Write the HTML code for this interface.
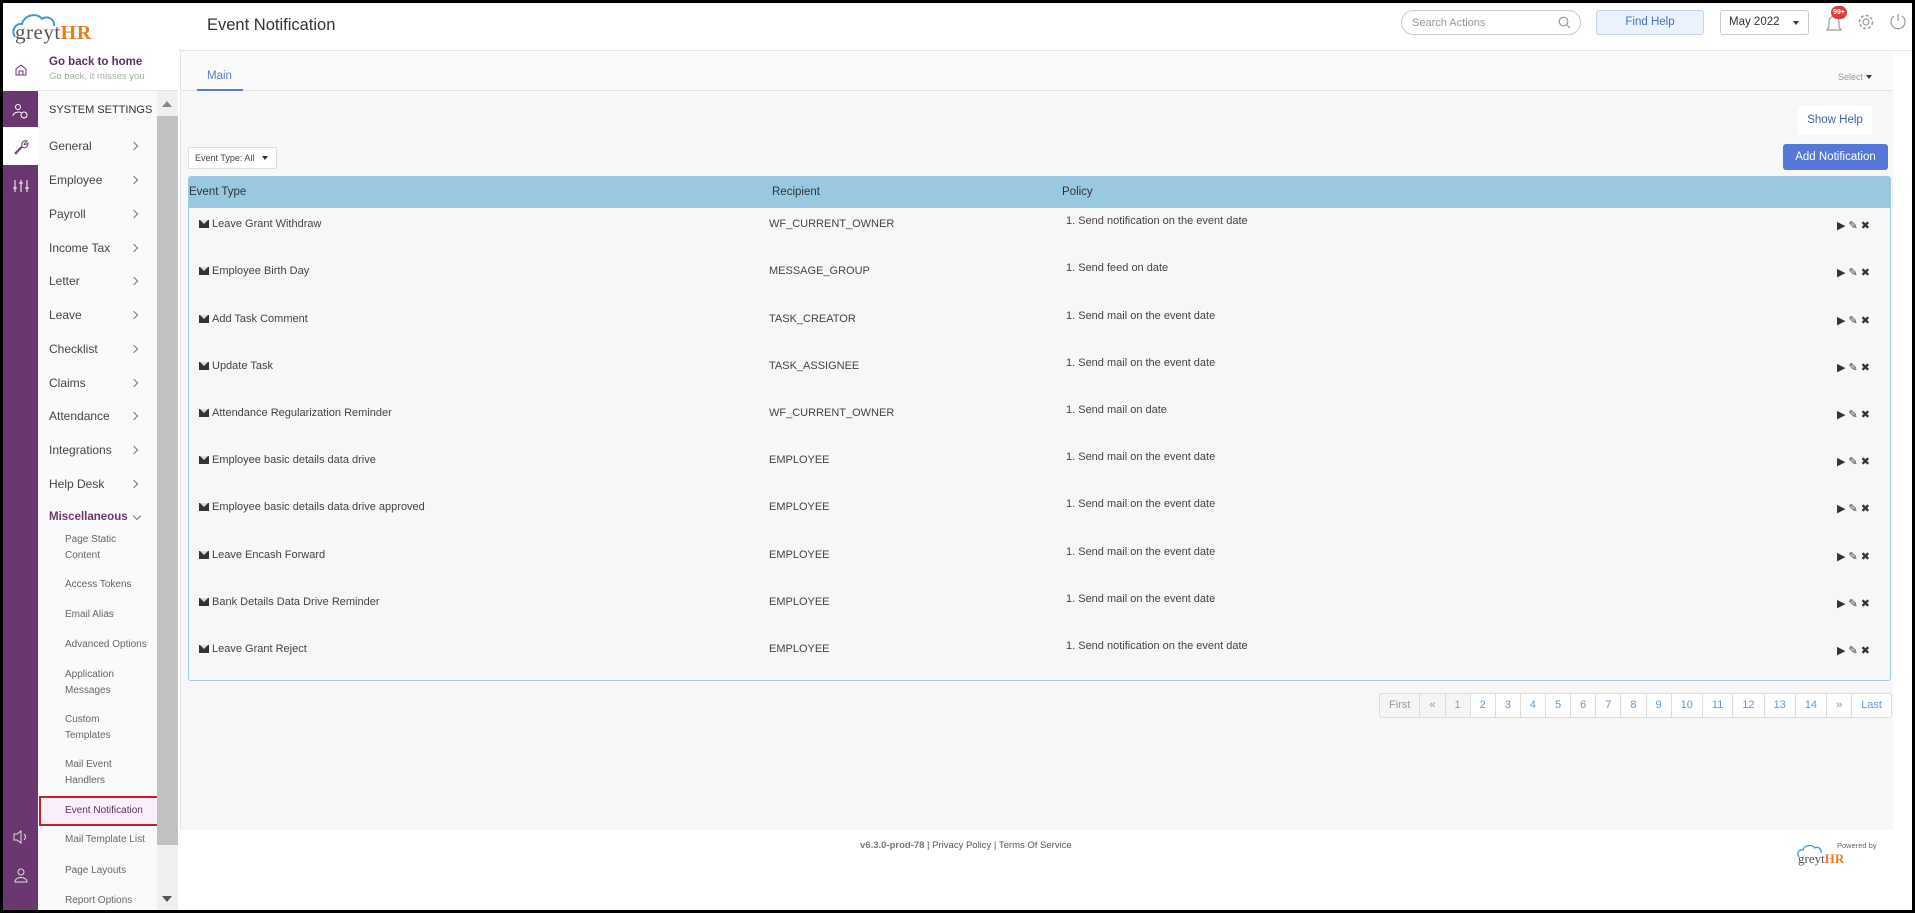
<!DOCTYPE html>
<html><head><meta charset="utf-8"><style>
*{box-sizing:border-box;margin:0;padding:0}
body{width:1915px;height:913px;overflow:hidden;background:#000;font-family:"Liberation Sans",sans-serif;color:#333;position:relative}
.a{position:absolute}
#page{position:absolute;left:3px;top:3px;width:1909px;height:907px;background:#fff;overflow:hidden}
.mi{position:absolute;left:46px;font-size:12px;color:#444}
.chev{position:absolute;left:128px;width:6px;height:6px;border-right:1.2px solid #777;border-top:1.2px solid #777;transform:rotate(45deg)}
.si{position:absolute;left:62px;font-size:10px;color:#666;line-height:16px}
.row{position:absolute;left:186px;width:1700px;height:47px;font-size:11px;color:#444}
.row .e{position:absolute;left:10px;top:10px}
.row .r{position:absolute;left:580px;top:10px}
.row .p{position:absolute;left:877px;top:7px}
.row .ic{position:absolute;left:1648px;top:11px;font-size:11px;color:#333}
.env{display:inline-block;width:10px;height:8px;background:#333;margin-right:3px;vertical-align:-1px;position:relative}
.env:after{content:"";position:absolute;left:1px;top:0;width:8px;height:4px;border-left:4px solid transparent;border-right:4px solid transparent;border-top:4px solid #ddd;box-sizing:border-box}
.pg{display:inline-block;height:23px;line-height:23px;padding:0 9px;border-right:1px solid #ddd;font-size:11px;color:#5b9bd5;background:#fff}
</style></head><body><div id="page">
<div class="a" style="left:6px;top:4px;width:88px;height:38px">
<svg width="88" height="38" class="a" style="left:0;top:0"><path d="M6 30 C2 24 6 16 13 17 C15 8 28 5 33 12 C38 8 46 12 45 19" fill="none" stroke="#3d9bd0" stroke-width="2"/></svg>
<div class="a" style="left:6px;top:13px;font-family:'Liberation Serif',serif;font-size:21px;color:#555;letter-spacing:0.5px">greyt<b style="color:#e67e22;font-family:'Liberation Serif';font-size:20px">HR</b></div>
</div>
<div class="a" style="left:204px;top:13px;font-size:16.5px;color:#333">Event Notification</div>
<div class="a" style="left:1398px;top:7px;width:180px;height:25px;border:1px solid #ccc;border-radius:13px;font-size:11px;color:#999;padding:6px 10px">Search Actions<svg class="a" style="right:9px;top:5px" width="13" height="13"><circle cx="5.5" cy="5.5" r="4.3" fill="none" stroke="#999" stroke-width="1.2"/><path d="M8.6 8.6L12 12" stroke="#999" stroke-width="1.2"/></svg></div>
<div class="a" style="left:1593px;top:7px;width:108px;height:25px;border:1px solid #c7d6e8;background:#eaf2fd;border-radius:3px;font-size:11.5px;color:#4a6fb5;text-align:center;line-height:23px">Find Help</div>
<div class="a" style="left:1717px;top:7px;width:89px;height:25px;border:1px solid #ccc;border-radius:3px;font-size:11.5px;color:#333;line-height:23px;padding-left:8px">May 2022<span class="a" style="right:9px;top:10px;border-left:3px solid transparent;border-right:3px solid transparent;border-top:4px solid #333"></span></div>
<svg class="a" style="left:1820px;top:10px" width="22" height="22"><path d="M4 17 L6 14 V9 C6 5 9 3 11 3 C13 3 16 5 16 9 V14 L18 17 Z" fill="none" stroke="#999" stroke-width="1.2"/></svg>
<div class="a" style="left:1828px;top:3px;width:16px;height:13px;background:#e03b3b;border-radius:7px;font-size:7px;color:#fff;text-align:center;line-height:13px;font-weight:bold">99+</div>
<svg class="a" style="left:1854px;top:10px" width="18" height="18"><circle cx="9" cy="9" r="3" fill="none" stroke="#999" stroke-width="1.2"/><circle cx="9" cy="9" r="6.5" fill="none" stroke="#999" stroke-width="1.5" stroke-dasharray="3 2"/></svg>
<svg class="a" style="left:1886px;top:9px" width="18" height="18"><path d="M5 4 A7 7 0 1 0 13 4" fill="none" stroke="#999" stroke-width="1.2"/><path d="M9 2 V9" stroke="#999" stroke-width="1.2"/></svg>
<div class="a" style="left:0;top:47px;width:1909px;height:1px;background:#e6e6e6"></div>
<div class="a" style="left:0;top:47px;width:35px;height:860px;background:#6b3770"></div>
<div class="a" style="left:0;top:47px;width:35px;height:41px;background:#fff"></div>
<div class="a" style="left:0;top:124px;width:35px;height:38px;background:#fff"></div>
<svg class="a" style="left:11px;top:60px" width="14" height="14"><path d="M2 6 L7 2 L12 6 V12 H2 Z M5 12 V8 H9 V12" fill="none" stroke="#6b3770" stroke-width="1"/></svg>
<svg class="a" style="left:9px;top:100px" width="18" height="18"><circle cx="6" cy="4" r="2.5" fill="none" stroke="#fff"/><path d="M1 13 C1 9 9 8 9 10" fill="none" stroke="#fff"/><circle cx="12" cy="12" r="3" fill="none" stroke="#fff"/></svg>
<svg class="a" style="left:9px;top:135px" width="18" height="18"><path d="M3 15 L10 8 C9 4 12 2 15 3 L12 6 L13 7 L16 5 C16 9 13 11 10 9 L4 16 Z" fill="none" stroke="#6b3770"/></svg>
<svg class="a" style="left:9px;top:175px" width="18" height="16"><path d="M3 2V14M9 2V14M15 2V14M1 10H5M7 5H11M13 10H17" stroke="#fff" stroke-width="1"/></svg>
<svg class="a" style="left:9px;top:826px" width="18" height="16"><path d="M2 5H5L9 2V14L5 11H2Z M12 5 C14 7 14 9 12 11" fill="none" stroke="#ddd"/></svg>
<svg class="a" style="left:10px;top:864px" width="16" height="16"><circle cx="8" cy="5" r="3" fill="none" stroke="#ddd"/><path d="M2 15 C2 9 14 9 14 15Z" fill="none" stroke="#ddd"/></svg>
<div class="a" style="left:35px;top:47px;width:140px;height:860px;background:#fafafa"></div>
<div class="a" style="left:35px;top:47px;width:140px;height:41px;background:#fff;border-bottom:1px solid #e5e5e5"></div>
<div class="a" style="left:46px;top:53px;font-size:11.5px;font-weight:bold;color:#5b2e63">Go back to home</div>
<div class="a" style="left:46px;top:68px;font-size:9.5px;color:#aaa">Go back, it misses you</div>
<div class="a" style="left:46px;top:101px;font-size:11px;color:#333">SYSTEM SETTINGS</div>
<div class="mi" style="top:136px">General</div><div class="chev" style="top:140px"></div>
<div class="mi" style="top:170px">Employee</div><div class="chev" style="top:174px"></div>
<div class="mi" style="top:204px">Payroll</div><div class="chev" style="top:208px"></div>
<div class="mi" style="top:238px">Income Tax</div><div class="chev" style="top:242px"></div>
<div class="mi" style="top:271px">Letter</div><div class="chev" style="top:275px"></div>
<div class="mi" style="top:305px">Leave</div><div class="chev" style="top:309px"></div>
<div class="mi" style="top:339px">Checklist</div><div class="chev" style="top:343px"></div>
<div class="mi" style="top:373px">Claims</div><div class="chev" style="top:377px"></div>
<div class="mi" style="top:406px">Attendance</div><div class="chev" style="top:410px"></div>
<div class="mi" style="top:440px">Integrations</div><div class="chev" style="top:444px"></div>
<div class="mi" style="top:474px">Help Desk</div><div class="chev" style="top:478px"></div>
<div class="mi" style="top:508px;color:#6b3770;font-weight:bold;font-size:11.5px">Miscellaneous</div><div class="chev" style="top:510px;left:131px;transform:rotate(135deg)"></div>
<div class="si" style="top:529px">Page Static<br>Content</div>
<div class="si" style="top:574px">Access Tokens</div>
<div class="si" style="top:604px">Email Alias</div>
<div class="si" style="top:634px">Advanced Options</div>
<div class="si" style="top:664px">Application<br>Messages</div>
<div class="si" style="top:709px">Custom<br>Templates</div>
<div class="si" style="top:754px">Mail Event<br>Handlers</div>
<div class="a" style="left:36px;top:793px;width:120px;height:30px;border:2px solid #c8202a;background:#fbeefb"></div>
<div class="si" style="top:800px;color:#5b2e63">Event Notification</div>
<div class="si" style="top:829px">Mail Template List</div>
<div class="si" style="top:860px">Page Layouts</div>
<div class="si" style="top:890px">Report Options</div>
<div class="a" style="left:154px;top:88px;width:21px;height:819px;background:#f0f0f0"></div>
<div class="a" style="left:154px;top:113px;width:21px;height:729px;background:#c1c1c1"></div>
<div class="a" style="left:159px;top:98px;border-left:5px solid transparent;border-right:5px solid transparent;border-bottom:6px solid #888"></div>
<div class="a" style="left:159px;top:893px;border-left:5px solid transparent;border-right:5px solid transparent;border-top:6px solid #555"></div>
<div class="a" style="left:177px;top:48px;width:1713px;height:779px;background:#f7f7f7;border-left:1px solid #e6e6e6"></div>
<div class="a" style="left:178px;top:48px;width:1712px;height:40px;background:#fafafa;border-bottom:1px solid #e3e3e3"></div>
<div class="a" style="left:204px;top:67px;font-size:11.5px;color:#5b7ec8">Main</div>
<div class="a" style="left:194px;top:86px;width:46px;height:2px;background:#5b7ec8"></div>
<div class="a" style="left:1835px;top:69px;font-size:9px;color:#999">Select<span style="display:inline-block;margin-left:3px;border-left:3px solid transparent;border-right:3px solid transparent;border-top:4px solid #333;vertical-align:1px"></span></div>
<div class="a" style="left:1795px;top:103px;width:74px;height:29px;background:#fff;font-size:11.5px;color:#3f5fae;text-align:center;line-height:29px">Show Help</div>
<div class="a" style="left:1780px;top:141px;width:105px;height:26px;background:#5577d8;border-radius:3px;font-size:11.5px;color:#fff;text-align:center;line-height:26px">Add Notification</div>
<div class="a" style="left:185px;top:144px;width:89px;height:22px;background:#fff;border:1px solid #ddd;border-radius:2px;font-size:9px;color:#444;line-height:20px;padding-left:6px">Event Type: All<span class="a" style="right:8px;top:8px;border-left:3px solid transparent;border-right:3px solid transparent;border-top:4px solid #333"></span></div>
<div class="a" style="left:185px;top:173px;width:1703px;height:505px;border:1px solid #9ecbe0;border-radius:3px;background:#f7f7f7"></div>
<div class="a" style="left:186px;top:174px;width:1701px;height:31px;background:#98c9e0;font-size:11.5px;color:#333">
<span class="a" style="left:0;top:9px">Event Type</span><span class="a" style="left:583px;top:9px">Recipient</span><span class="a" style="left:873px;top:9px">Policy</span></div>
<div class="row" style="top:205px"><span class="e"><i class="env"></i>Leave Grant Withdraw</span><span class="r">WF_CURRENT_OWNER</span><span class="p">1. Send notification on the event date</span><span class="ic">▶ ✎ ✖</span></div>
<div class="row" style="top:252px"><span class="e"><i class="env"></i>Employee Birth Day</span><span class="r">MESSAGE_GROUP</span><span class="p">1. Send feed on date</span><span class="ic">▶ ✎ ✖</span></div>
<div class="row" style="top:300px"><span class="e"><i class="env"></i>Add Task Comment</span><span class="r">TASK_CREATOR</span><span class="p">1. Send mail on the event date</span><span class="ic">▶ ✎ ✖</span></div>
<div class="row" style="top:347px"><span class="e"><i class="env"></i>Update Task</span><span class="r">TASK_ASSIGNEE</span><span class="p">1. Send mail on the event date</span><span class="ic">▶ ✎ ✖</span></div>
<div class="row" style="top:394px"><span class="e"><i class="env"></i>Attendance Regularization Reminder</span><span class="r">WF_CURRENT_OWNER</span><span class="p">1. Send mail on date</span><span class="ic">▶ ✎ ✖</span></div>
<div class="row" style="top:441px"><span class="e"><i class="env"></i>Employee basic details data drive</span><span class="r">EMPLOYEE</span><span class="p">1. Send mail on the event date</span><span class="ic">▶ ✎ ✖</span></div>
<div class="row" style="top:488px"><span class="e"><i class="env"></i>Employee basic details data drive approved</span><span class="r">EMPLOYEE</span><span class="p">1. Send mail on the event date</span><span class="ic">▶ ✎ ✖</span></div>
<div class="row" style="top:536px"><span class="e"><i class="env"></i>Leave Encash Forward</span><span class="r">EMPLOYEE</span><span class="p">1. Send mail on the event date</span><span class="ic">▶ ✎ ✖</span></div>
<div class="row" style="top:583px"><span class="e"><i class="env"></i>Bank Details Data Drive Reminder</span><span class="r">EMPLOYEE</span><span class="p">1. Send mail on the event date</span><span class="ic">▶ ✎ ✖</span></div>
<div class="row" style="top:630px"><span class="e"><i class="env"></i>Leave Grant Reject</span><span class="r">EMPLOYEE</span><span class="p">1. Send notification on the event date</span><span class="ic">▶ ✎ ✖</span></div>
<div class="a" style="left:1376px;top:690px;height:25px;border:1px solid #ddd;border-radius:3px;overflow:hidden;white-space:nowrap;font-size:0"><span class="pg" style="color:#999;background:#f5f5f5">First</span><span class="pg" style="color:#999;background:#f5f5f5">«</span><span class="pg" style="color:#999;background:#f5f5f5">1</span><span class="pg">2</span><span class="pg">3</span><span class="pg">4</span><span class="pg">5</span><span class="pg">6</span><span class="pg">7</span><span class="pg">8</span><span class="pg">9</span><span class="pg">10</span><span class="pg">11</span><span class="pg">12</span><span class="pg">13</span><span class="pg">14</span><span class="pg">»</span><span class="pg" style="border-right:0">Last</span></div>
<div class="a" style="left:857px;top:837px;font-size:9.5px;color:#555"><span style="color:#777;font-weight:bold">v6.3.0-prod-78</span> | Privacy Policy | Terms Of Service</div>
<div class="a" style="left:1792px;top:838px;width:90px;height:28px">
<svg width="30" height="20" class="a" style="left:0;top:1px"><path d="M4 15 C1 11 4 7 8 8 C9 3 17 2 20 6 C23 4 27 7 26 11" fill="none" stroke="#3d9bd0" stroke-width="1.3"/></svg>
<div class="a" style="left:3px;top:10px;font-family:'Liberation Serif',serif;font-size:13px;color:#555">greyt<b style="color:#e67e22;font-family:'Liberation Serif';font-size:13px">HR</b></div>
<div class="a" style="left:42px;top:0;font-size:7.5px;color:#666">Powered by</div></div>
</div></body></html>
